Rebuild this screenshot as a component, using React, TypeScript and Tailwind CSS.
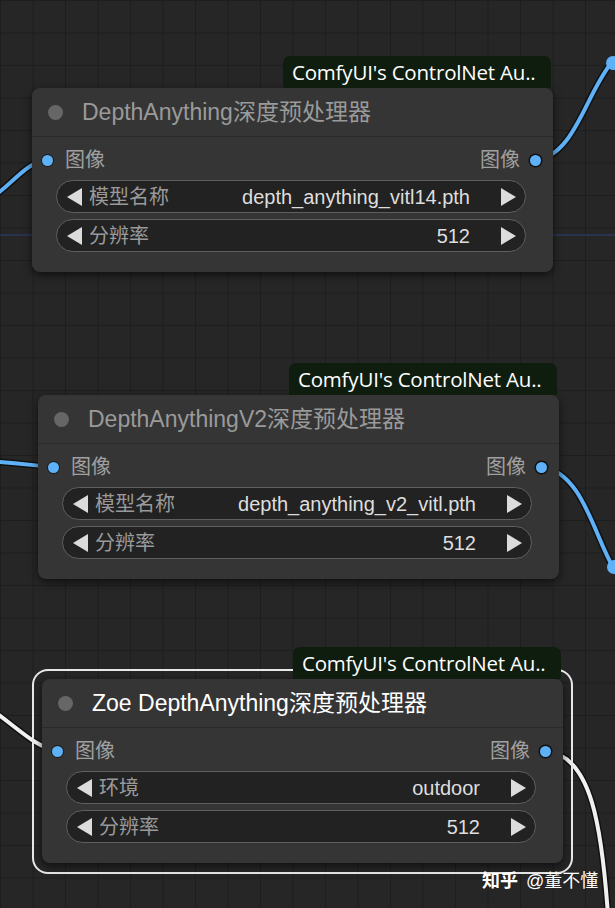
import React from "react";

type Widget = { label: string; value: string };
type NodeProps = {
  x: number;
  y: number;
  title: string;
  titleColor: string;
  widgets: Widget[];
  selected?: boolean;
};

const Tri = ({ dir }: { dir: "l" | "r" }) => (
  <svg width="15" height="18" viewBox="0 0 15 18" className="shrink-0">
    {dir === "l" ? (
      <polygon points="15,0 0,9 15,18" fill="#dcdcdc" />
    ) : (
      <polygon points="0,0 15,9 0,18" fill="#dcdcdc" />
    )}
  </svg>
);

function Node({ x, y, title, titleColor, widgets, selected }: NodeProps) {
  return (
    <div className="absolute" style={{ left: x, top: y }}>
      {selected && (
        <div className="absolute left-[-10px] top-[-10px] w-[541px] h-[205px] rounded-[16px] border-2 border-[#e8e8e8]" />
      )}
      <div className="relative w-[521px] h-[184px] rounded-[8px] bg-[#353535] shadow-[0_3px_8px_rgba(0,0,0,0.6)] flex flex-col">
        <div className="absolute right-[2px] top-[-32px] h-[32px] w-[268px] rounded-t-[7px] rounded-b-[2px] bg-[#0f1d0f] flex items-center pl-[9px] text-[20.5px] text-white font-['Open_Sans','Noto_Sans',sans-serif] leading-none tracking-[-0.2px]">
          ComfyUI's ControlNet Au..
        </div>
        <div className="h-[49px] flex items-center pl-[16px] gap-[19px] border-b border-[#2a2a2a]">
          <div className="w-[15px] h-[15px] rounded-full bg-[#666666]" />
          <span className={`text-[23px] leading-none ${titleColor}`}>{title}</span>
        </div>
        <div className="mt-[10px] h-[26px] flex items-center justify-between pl-[10px] pr-[12px]">
          <div className="flex items-center gap-[12px]">
            <div className="w-[11px] h-[11px] rounded-full bg-[#5eb1f6] ring-1 ring-[#1a1a1a]" />
            <span className="text-[20px] leading-none text-[#a0a0a0]">图像</span>
          </div>
          <div className="flex items-center gap-[10px]">
            <span className="text-[20px] leading-none text-[#a0a0a0]">图像</span>
            <div className="w-[11px] h-[11px] rounded-full bg-[#5eb1f6] ring-[1.5px] ring-[#111]" />
          </div>
        </div>
        <div className="mt-[7px] ml-[24px] mr-[27px] flex flex-col gap-[6px]">
          {widgets.map((w) => (
            <div
              key={w.label}
              className="h-[33px] rounded-full bg-[#222222] border-[1.5px] border-[#5f5f5f] flex items-center pl-[10px] pr-[9px]"
            >
              <Tri dir="l" />
              <span className="ml-[7px] text-[20px] leading-none text-[#9a9a9a]">{w.label}</span>
              <span className="ml-auto text-[20px] leading-none text-[#dedede]">{w.value}</span>
              <span className="ml-[31px]">
                <Tri dir="r" />
              </span>
            </div>
          ))}
        </div>
      </div>
    </div>
  );
}

function Wire({ d, color }: { d: string; color: string }) {
  return (
    <g fill="none" strokeLinecap="round">
      <path d={d} stroke="rgba(0,0,0,0.55)" strokeWidth="7" />
      <path d={d} stroke={color} strokeWidth="4" />
    </g>
  );
}

export default function App() {
  const blue = "#5eb1f6";
  return (
    <div className="relative w-[615px] h-[908px] overflow-hidden bg-[#262626] bg-[linear-gradient(#1e1e1e_1px,transparent_1px),linear-gradient(90deg,#1e1e1e_1px,transparent_1px)] bg-[size:32.5px_32.5px] font-['Liberation_Sans','Noto_Sans_CJK_SC',sans-serif]">
      <svg className="absolute inset-0" width="615" height="908">
        <line x1="0" y1="235" x2="615" y2="235" stroke="#2a3250" strokeWidth="2" />
        <Wire d="M -20 205 C 10 190 22 163 47 160" color={blue} />
        <Wire d="M 536 160 C 575 155 585 95 612 62" color={blue} />
        <circle cx="613" cy="63" r="7" fill={blue} />
        <Wire d="M -20 461 C 15 462 35 466 54 467" color={blue} />
        <Wire d="M 542 467 C 582 472 594 535 613 567" color={blue} />
        <circle cx="614" cy="567" r="7" fill={blue} />
        <Wire d="M -15 705 C 15 725 35 748 58 751" color="#f0f0f0" />
        <Wire d="M 546 751 C 592 755 602 830 608 915" color="#f0f0f0" />
      </svg>

      <Node
        x={32}
        y={88}
        title="DepthAnything深度预处理器"
        titleColor="text-[#9a9a9a]"
        widgets={[
          { label: "模型名称", value: "depth_anything_vitl14.pth" },
          { label: "分辨率", value: "512" },
        ]}
      />
      <Node
        x={38}
        y={395}
        title="DepthAnythingV2深度预处理器"
        titleColor="text-[#9a9a9a]"
        widgets={[
          { label: "模型名称", value: "depth_anything_v2_vitl.pth" },
          { label: "分辨率", value: "512" },
        ]}
      />
      <Node
        x={42}
        y={679}
        title="Zoe DepthAnything深度预处理器"
        titleColor="text-white"
        selected
        widgets={[
          { label: "环境", value: "outdoor" },
          { label: "分辨率", value: "512" },
        ]}
      />

      <div className="absolute left-[482px] top-[872px] text-[18px] leading-none text-white flex items-center gap-[8px]">
        <span className="font-semibold">知乎</span>
        <span>@董不懂</span>
      </div>
    </div>
  );
}
